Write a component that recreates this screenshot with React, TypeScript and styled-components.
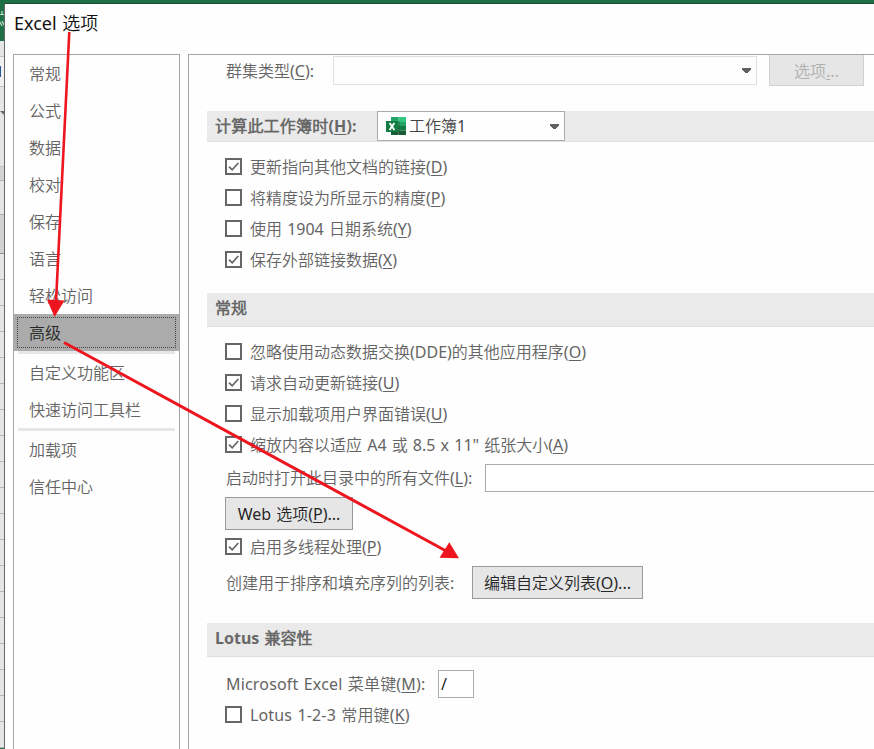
import React from "react";
import styled, { createGlobalStyle, css } from "styled-components";

const GlobalStyle = createGlobalStyle`
  * { box-sizing: border-box; }
  body {
    margin: 0;
    overflow: hidden;
    background: #fff;
    font-family: "Noto Sans", "Noto Sans CJK SC DemiLight", "Noto Sans CJK SC", sans-serif;
    font-size: 16px;
    font-weight: 400;
    word-spacing: 1px;
    color: #646464;
  }
  u { text-decoration-thickness: 1px; text-underline-offset: 2px; text-decoration-skip-ink: none; }
`;

const Screen = styled.div`
  position: relative;
  display: flex;
  width: 874px;
  height: 749px;
  padding-top: 3px;
  background: #1f7145;
  overflow: hidden;
`;

const Sheet = styled.div`
  width: 4px;
  flex: none;
  display: flex;
  flex-direction: column;
  margin-top: -3px;
`;

const SheetCell = styled.div<{ $h: number; $bg?: string; $line?: string }>`
  height: ${(p) => p.$h}px;
  flex: none;
  background: ${(p) => p.$bg ?? "#e6e6e6"};
  border-bottom: ${(p) => (p.$line ? `1px solid ${p.$line}` : "0")};
  overflow: hidden;
`;

const Dialog = styled.div`
  flex: 1;
  min-width: 0;
  display: flex;
  flex-direction: column;
  background: #fefefe;
  border-left: 1px solid #666;
  border-top: 1px solid #1b4a31;
`;

const Title = styled.h1`
  margin: 0;
  height: 50px;
  flex: none;
  padding: 7px 0 0 9px;
  font-size: 18px;
  line-height: 24px;
  font-weight: inherit;
  color: #111;
`;

const Body = styled.div`
  flex: 1;
  min-height: 0;
  display: flex;
  gap: 8px;
  padding-left: 8px;
`;

const Sidebar = styled.nav`
  width: 167px;
  flex: none;
  border: 1px solid #a6a6a6;
  border-bottom: 0;
`;

const NavItem = styled.div<{ $selected?: boolean }>`
  height: 37px;
  padding: 1px 0 0 15px;
  line-height: 37px;
  white-space: nowrap;
  ${(p) =>
    p.$selected &&
    css`
      background: #ababab;
      color: #262626;
      outline: 1px dotted #444;
      outline-offset: -4px;
    `}
`;

const NavRule = styled.hr`
  height: 3px;
  margin: 0 4px;
  border: 0;
  background: #e6e6e8;
`;

const Pane = styled.main`
  flex: 1;
  min-width: 0;
  border-left: 1px solid #a6a6a6;
  border-top: 1px solid #a6a6a6;
  overflow: hidden;
`;

const SectionHeader = styled.h2<{ $h: number; $lift?: number }>`
  display: flex;
  align-items: center;
  height: ${(p) => p.$h}px;
  margin: 0 0 0 18px;
  padding: 0 0 ${(p) => p.$lift ?? 0}px 8px;
  background: #eaeaea;
  border-bottom: 1px solid #e0e0e3;
  font-size: 16px;
  font-weight: 700;
  color: #686868;
  white-space: pre;
`;

const Group = styled.section<{ $top: number; $bottom?: number }>`
  padding: ${(p) => p.$top}px 0 ${(p) => p.$bottom ?? 0}px 36px;
`;

const Row = styled.div<{ $h: number; $mb?: number }>`
  display: flex;
  align-items: center;
  height: ${(p) => p.$h}px;
  margin-bottom: ${(p) => p.$mb ?? 0}px;
`;

const Label = styled.span<{ $w?: number; $ls?: number; $indent?: number }>`
  flex: none;
  width: ${(p) => (p.$w ? `${p.$w}px` : "auto")};
  padding-left: ${(p) => p.$indent ?? (p.$w ? 1 : 0)}px;
  letter-spacing: ${(p) => p.$ls ?? 0}px;
  line-height: 24px;
  white-space: pre;
`;

const CheckRow = styled.label`
  display: flex;
  align-items: center;
  gap: 8px;
  height: 31px;
`;

const Box = styled.span`
  width: 17px;
  height: 17px;
  flex: none;
  display: flex;
  border: 2px solid #666;
  background: #fff;
`;

const Button = styled.button<{ $w: number; $h: number; $disabled?: boolean }>`
  flex: none;
  width: ${(p) => p.$w}px;
  height: ${(p) => p.$h}px;
  padding: 0 0 2px;
  border: 1px solid ${(p) => (p.$disabled ? "#d0d0d0" : "#999")};
  background: #e6e6e6;
  color: ${(p) => (p.$disabled ? "#b0b0b0" : "#262626")};
  font: inherit;
  word-spacing: inherit;
  white-space: pre;
`;

const DisabledButton = styled(Button)`
  margin: -2px 0 0 12px;
  padding: 0;
`;

const Select = styled.div<{ $w: number; $h: number; $muted?: boolean }>`
  flex: none;
  display: flex;
  align-items: center;
  width: ${(p) => p.$w}px;
  height: ${(p) => p.$h}px;
  padding: 0 5px 0 8px;
  border: 1px solid ${(p) => (p.$muted ? "#e0e0e0" : "#ababab")};
  background: #fefefe;
  font-weight: 400;
  color: #444;
`;

const SelectText = styled.span`
  flex: 1;
  padding: 0 0 2px 3px;
`;

const Field = styled.div<{ $w: number }>`
  flex: none;
  width: ${(p) => p.$w}px;
  height: 28px;
  padding-left: 2px;
  border: 1px solid #ababab;
  background: #fff;
  line-height: 26px;
  color: #222;
`;

const Overlay = styled.svg`
  position: absolute;
  inset: 0;
  pointer-events: none;
`;

const Caret = () => (
  <svg width="9" height="5" viewBox="0 0 9 5" shapeRendering="crispEdges">
    <path d="M0 0H9V1L5.5 5H3.5L0 1Z" fill="#606060" />
  </svg>
);

const Tick = () => (
  <svg width="13" height="13" viewBox="0 0 13 13">
    <path d="M2 6.6L5.2 9.8L11.3 3" fill="none" stroke="#666" strokeWidth="1.7" />
  </svg>
);

const ExcelIcon = () => (
  <svg width="20" height="18" viewBox="0 0 20 18">
    <path d="M5 0H12.5V5H5Z" fill="#21a366" />
    <path d="M12.5 0H20V5H12.5Z" fill="#33c481" />
    <path d="M5 5H12.5V9H5Z" fill="#107c41" />
    <path d="M12.5 5H20V9H12.5Z" fill="#21a366" />
    <path d="M5 9H12.5V18H5Z" fill="#185c37" />
    <path d="M12.5 9H20V13.5H12.5Z" fill="#107c41" />
    <path d="M12.5 13.5H20V18H12.5Z" fill="#185c37" />
    <path d="M5 4H13.5V15.5H5Z" fill="#0b4a28" opacity="0.5" />
    <path d="M0 4H12V15H0Z" fill="#107c41" />
    <path d="M3.6 6L8.4 13M8.4 6L3.6 13" stroke="#fff" strokeWidth="1.9" />
  </svg>
);

type CheckProps = { checked?: boolean; children: React.ReactNode; spacing?: number };
const Check = ({ checked, children, spacing }: CheckProps) => (
  <CheckRow>
    <Box>{checked && <Tick />}</Box>
    <Label $ls={spacing}>{children}</Label>
  </CheckRow>
);

const mainPages = ["常规", "公式", "数据", "校对", "保存", "语言", "轻松访问"];
const gridRows = Array.from({ length: 19 }, (_, i) => i);

export default function App() {
  return (
    <>
      <GlobalStyle />
      <Screen>
        <Sheet>
          <SheetCell $h={41} $bg="#1f7145">
            <svg width="4" height="41">
              <path d="M0 14.5H4M2 11V14M0 22L2 26M2 21L4 25" stroke="#c5ddcf" strokeWidth="1.2" fill="none" />
            </svg>
          </SheetCell>
          <SheetCell $h={16} $line="#c4c4c4" />
          <SheetCell $h={30} $bg="#f0f0f0" $line="#c4c4c4">
            <svg width="4" height="29">
              <path d="M0 9H1V20H0Z" fill="#2b579a" />
            </svg>
          </SheetCell>
          <SheetCell $h={80} $line="#c4c4c4">
            <svg width="4" height="79">
              <path d="M0 24H4V28Z" fill="#666" />
            </svg>
          </SheetCell>
          <SheetCell $h={14} $bg="#d4d4d4" $line="#b4b4b4" />
          <SheetCell $h={34} $line="#b4b4b4" />
          <SheetCell $h={39} $bg="#d2d2d2" $line="#909090" />
          {gridRows.map((i) => (
            <SheetCell key={i} $h={26} $line="#b8b8b8" />
          ))}
        </Sheet>
        <Dialog>
          <Title>Excel 选项</Title>
          <Body>
            <Sidebar>
              {mainPages.map((page) => (
                <NavItem key={page}>{page}</NavItem>
              ))}
              <NavItem $selected>高级</NavItem>
              <NavRule />
              <NavItem>自定义功能区</NavItem>
              <NavItem>快速访问工具栏</NavItem>
              <NavRule />
              <NavItem>加载项</NavItem>
              <NavItem>信任中心</NavItem>
            </Sidebar>
            <Pane>
              <Group $top={0} $bottom={25}>
                <Row $h={31}>
                  <Label $w={108}>群集类型(<u>C</u>):</Label>
                  <Select $w={424} $h={29} $muted>
                    <SelectText />
                    <Caret />
                  </Select>
                  <DisabledButton $w={95} $h={33} $disabled>
                    选项<u>.</u>..
                  </DisabledButton>
                </Row>
              </Group>
              <SectionHeader $h={31}>
                <Label $w={162} $ls={0.2} $indent={0}>计算此工作簿时(<u>H</u>):</Label>
                <Select $w={188} $h={30}>
                  <ExcelIcon />
                  <SelectText>工作簿1</SelectText>
                  <Caret />
                </Select>
              </SectionHeader>
              <Group $top={9} $bottom={18}>
                <Check checked>更新指向其他文档的链接(<u>D</u>)</Check>
                <Check>将精度设为所显示的精度(<u>P</u>)</Check>
                <Check>使用 1904 日期系统(<u>Y</u>)</Check>
                <Check checked>保存外部链接数据(<u>X</u>)</Check>
              </Group>
              <SectionHeader $h={34} $lift={5}>常规</SectionHeader>
              <Group $top={9} $bottom={20}>
                <Check>忽略使用动态数据交换(DDE)的其他应用程序(<u>O</u>)</Check>
                <Check checked>请求自动更新链接(<u>U</u>)</Check>
                <Check>显示加载项用户界面错误(<u>U</u>)</Check>
                <Check checked>缩放内容以适应 A4 或 8.5 x 11" 纸张大小(<u>A</u>)</Check>
                <Row $h={36}>
                  <Label $w={260}>启动时打开此目录中的所有文件(<u>L</u>):</Label>
                  <Field $w={420} />
                </Row>
                <Row $h={35}>
                  <Button $w={128} $h={33}>Web 选项(<u>P</u>)...</Button>
                </Row>
                <Check checked>启用多线程处理(<u>P</u>)</Check>
                <Row $h={41}>
                  <Label $w={247}>创建用于排序和填充序列的列表:</Label>
                  <Button $w={171} $h={33}>编辑自定义列表(<u>O</u>)...</Button>
                </Row>
              </Group>
              <SectionHeader $h={34} $lift={5}>Lotus 兼容性</SectionHeader>
              <Group $top={13}>
                <Row $h={28} $mb={1}>
                  <Label $w={213} $ls={0.17}>Microsoft Excel 菜单键(<u>M</u>):</Label>
                  <Field $w={36}>/</Field>
                </Row>
                <Check spacing={0.15}>Lotus 1-2-3 常用键(<u>K</u>)</Check>
              </Group>
            </Pane>
          </Body>
        </Dialog>
        <Overlay width="874" height="749" viewBox="0 0 874 749">
          <g fill="#ed161f" stroke="#ed161f">
            <path d="M69.3 32L56 302" strokeWidth="2.6" />
            <path d="M47 299.5L64.5 300.5L54.5 317Z" stroke="none" />
            <path d="M64 342.5L447 551.5" strokeWidth="3" />
            <path d="M449.3 542.3L459 558.3L439.5 557.8Z" stroke="none" />
          </g>
        </Overlay>
      </Screen>
    </>
  );
}
